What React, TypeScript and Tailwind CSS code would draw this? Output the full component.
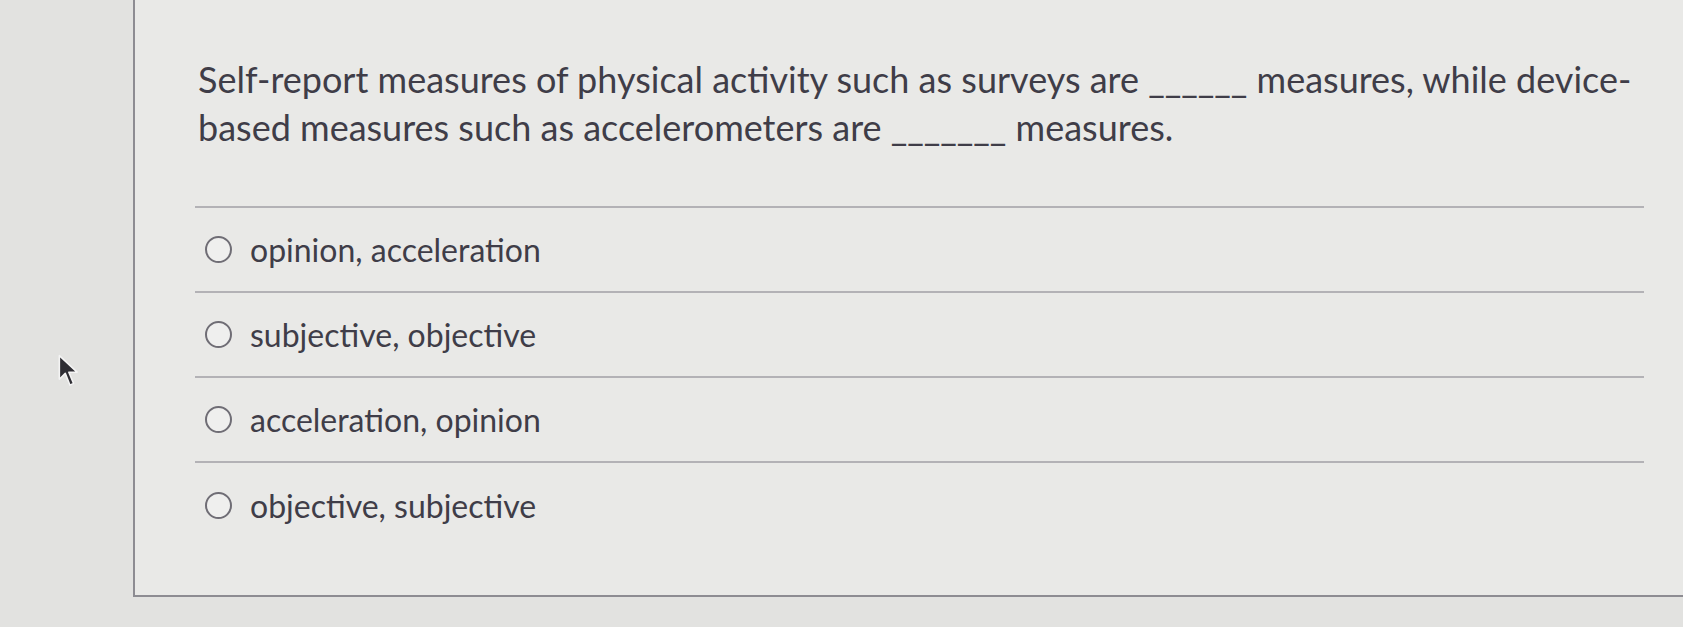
import React from 'react';

const options = [
  'opinion, acceleration',
  'subjective, objective',
  'acceleration, opinion',
  'objective, subjective',
];

const App = () => {
  return (
    <div
      className="relative flex h-[627px] w-full overflow-hidden bg-[#e2e2e0]"
      style={{ fontFamily: 'Lato, "Open Sans", sans-serif' }}
    >
      {/* Mouse cursor */}
      <svg
        className="absolute left-[57px] top-[353px]"
        width="26"
        height="36"
        viewBox="0 0 22 30"
      >
        <path
          d="M2 2 L2 22 L7 17 L11 27 L14 25.5 L10 16 L17 16 Z"
          fill="#2e2d33"
          stroke="#f4f4f4"
          strokeWidth="1.3"
          strokeLinejoin="round"
        />
      </svg>

      <div className="w-[133px] shrink-0" />

      {/* Question panel */}
      <div className="h-[597px] flex-1 border-b-2 border-l-2 border-[#8d8c92] bg-[#e9e9e7] pl-[60px] pr-[39px]">
        <p className="pt-[55px] pl-[3px] text-[36px] leading-[48px] text-[#3f3d48]">
          Self-report measures of physical activity such as surveys are ______ measures, while device-based
          measures such as accelerometers are _______ measures.
        </p>

        <div className="mt-[55px] border-t-2 border-[#b3b2b6]">
          {options.map((opt, i) => (
            <div
              key={opt}
              className={`flex h-[85px] items-center gap-[18px] pl-[10px] ${
                i < options.length - 1 ? 'border-b-2 border-[#b3b2b6]' : ''
              }`}
            >
              <span className="h-[27px] w-[27px] shrink-0 rounded-full border-2 border-[#6f6d75] bg-[#efefee]" />
              <span className="text-[32px] leading-none text-[#3f3d48]">{opt}</span>
            </div>
          ))}
        </div>
      </div>
    </div>
  );
};

export default App;
